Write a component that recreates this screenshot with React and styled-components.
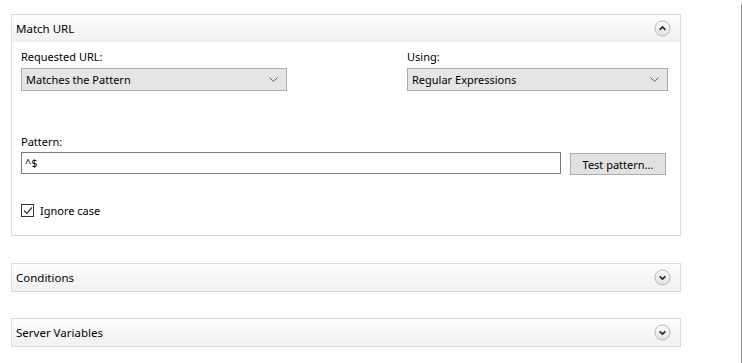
import React from "react";
import styled, { createGlobalStyle } from "styled-components";

const Global = createGlobalStyle`
    html, body {
        margin: 0;
        padding: 0;
        background: #fff;
    }
    body {
        font-family: "Noto Sans", "Segoe UI", sans-serif;
        font-size: 11px;
        color: #000;
    }
`

const Page = styled.div`
    display: flex;
    width: 742px;
    height: 363px;
    overflow: hidden;
`

const Content = styled.div`
    flex: 1;
    padding: 14px 0 0 11px;
`

const Edge = styled.div`
    width: 1px;
    background: linear-gradient(#f0f0f0 0, #f0f0f0 4px, #8c8c8c 5px, #8c8c8c 100%);
`

const Panel = styled.section`
    width: 668px;
    border: 1px solid #dadada;
    margin-top: ${p => p.gap || 0}px;
    background: #fff;
`

const Header = styled.div`
    height: 27px;
    display: flex;
    align-items: center;
    justify-content: space-between;
    padding: 0 9px 0 4px;
    background: linear-gradient(#fdfdfd, #f1f1f1);
    font-size: 11.5px;
    line-height: 16px;
`

const Body = styled.div`
    padding: 7px 12px 18px 9px;
`

const TopRow = styled.div`
    display: flex;
    justify-content: space-between;
`

const Field = styled.div`
    width: ${p => p.w}px;
`

const Label = styled.div`
    height: 16px;
    line-height: 16px;
    margin-bottom: ${p => p.mb || 3}px;
`

const Select = styled.div`
    height: 21px;
    border: 1px solid #adadad;
    background: #e5e5e5;
    display: flex;
    align-items: center;
    justify-content: space-between;
    padding: 0 8px 0 4px;
`

const PatternRow = styled.div`
    display: flex;
    align-items: flex-start;
    gap: 9px;
`

const Input = styled.div`
    box-sizing: border-box;
    width: 540px;
    height: 22px;
    border: 1px solid #7a7a7a;
    line-height: 19px;
    padding-left: 3px;
`

const Button = styled.div`
    margin-top: 1px;
    width: 96px;
    height: 22px;
    box-sizing: border-box;
    border: 1px solid #adadad;
    background: #e1e1e1;
    display: flex;
    align-items: center;
    justify-content: center;
`

const CheckRow = styled.label`
    display: flex;
    align-items: center;
    gap: 6px;
    margin-top: 29px;
    height: 13px;
`

const Box = styled.span`
    width: 13px;
    height: 13px;
    box-sizing: border-box;
    border: 1px solid #333;
    background: #fff;
    display: flex;
    align-items: center;
    justify-content: center;
`

const Spacer = styled.div`
    height: ${p => p.h}px;
`

const Caret = () => (
    <svg width="9" height="5" viewBox="0 0 9 5">
        <path d="M0.5 0.5 L4.5 4.5 L8.5 0.5" fill="none" stroke="#606060" strokeWidth="1" />
    </svg>
)

const Toggle = ({ up }) => (
    <svg width="17" height="17" viewBox="0 0 17 17">
        <defs>
            <linearGradient id={up ? "gu" : "gd"} x1="0" y1="0" x2="0" y2="1">
                <stop offset="0" stopColor="#ffffff" />
                <stop offset="1" stopColor="#e2e2e2" />
            </linearGradient>
        </defs>
        <circle cx="8.5" cy="8.5" r="7.5" fill={`url(#${up ? "gu" : "gd"})`} stroke="#b4b4b4" strokeWidth="1" />
        <path
            d={up ? "M5.6 9.8 L8.5 7 L11.4 9.8" : "M5.6 7.3 L8.5 10.1 L11.4 7.3"}
            fill="none"
            stroke="#2a2a2a"
            strokeWidth="1.7"
        />
    </svg>
)

export default function App() {
    return (
        <Page>
            <Global />
            <Content>
                <Panel>
                    <Header>
                        <span>Match URL</span>
                        <Toggle up />
                    </Header>
                    <Body>
                        <TopRow>
                            <Field w={266}>
                                <Label>Requested URL:</Label>
                                <Select>
                                    <span>Matches the Pattern</span>
                                    <Caret />
                                </Select>
                            </Field>
                            <Field w={261}>
                                <Label>Using:</Label>
                                <Select>
                                    <span>Regular Expressions</span>
                                    <Caret />
                                </Select>
                            </Field>
                        </TopRow>
                        <Spacer h={43} />
                        <Label mb={2}>Pattern:</Label>
                        <PatternRow>
                            <Input>^$</Input>
                            <Button>Test pattern...</Button>
                        </PatternRow>
                        <CheckRow>
                            <Box>
                                <svg width="10" height="9" viewBox="0 0 10 9">
                                    <path d="M1 4.5 L3.8 7.3 L9 1.5" fill="none" stroke="#333" strokeWidth="1.2" />
                                </svg>
                            </Box>
                            <span>Ignore case</span>
                        </CheckRow>
                    </Body>
                </Panel>
                <Panel gap={27}>
                    <Header>
                        <span>Conditions</span>
                        <Toggle />
                    </Header>
                </Panel>
                <Panel gap={26}>
                    <Header>
                        <span>Server Variables</span>
                        <Toggle />
                    </Header>
                </Panel>
            </Content>
            <Edge />
        </Page>
    );
}
